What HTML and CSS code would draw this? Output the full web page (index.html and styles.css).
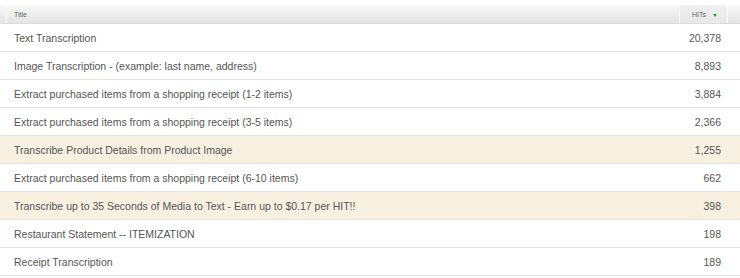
FILE: index.html
```html
<!DOCTYPE html>
<html>
<head>
<meta charset="utf-8">
<link rel="stylesheet" href="styles.css">
</head>
<body>
<div class="table">
  <div class="head">
    <div class="h-gap"></div>
    <div class="h-title">Title</div>
    <div class="h-hits">HITs <span class="arrow"></span></div>
    <div class="h-end"></div>
  </div>
  <div class="row"><span class="t">Text Transcription</span><span class="n">20,378</span></div>
  <div class="row"><span class="t">Image Transcription - (example: last name, address)</span><span class="n">8,893</span></div>
  <div class="row"><span class="t">Extract purchased items from a shopping receipt (1-2 items)</span><span class="n">3,884</span></div>
  <div class="row"><span class="t">Extract purchased items from a shopping receipt (3-5 items)</span><span class="n">2,366</span></div>
  <div class="row hl"><span class="t">Transcribe Product Details from Product Image</span><span class="n">1,255</span></div>
  <div class="row"><span class="t">Extract purchased items from a shopping receipt (6-10 items)</span><span class="n">662</span></div>
  <div class="row hl"><span class="t">Transcribe up to 35 Seconds of Media to Text - Earn up to $0.17 per HIT!!</span><span class="n">398</span></div>
  <div class="row"><span class="t">Restaurant Statement -- ITEMIZATION</span><span class="n">198</span></div>
  <div class="row"><span class="t">Receipt Transcription</span><span class="n">189</span></div>
</div>
</body>
</html>
```
FILE: styles.css
```css
html, body {
  margin: 0;
  padding: 0;
  background: #ffffff;
}
body {
  font-family: "Liberation Sans", Arial, sans-serif;
  padding-top: 5px;
}
.table {
  width: 740px;
}
.head {
  display: flex;
  height: 19px;
  background: linear-gradient(#f7f7f7, #e4e4e4);
  border-bottom: 1px solid #dcdcdc;
  box-sizing: border-box;
}
.h-gap {
  width: 6px;
  border-right: 1px solid #ffffff;
}
.h-title {
  flex: 1;
  font-size: 7px;
  color: #666;
  padding-left: 7px;
  line-height: 19px;
}
.h-hits {
  width: 49px;
  box-sizing: border-box;
  background: linear-gradient(#f0f0f0, #e8e8e8);
  border-left: 1px solid #f8f8f8;
  border-right: 1px solid #ffffff;
  font-size: 7px;
  color: #666;
  line-height: 19px;
  text-align: center;
  padding-left: 2px;
}
.arrow {
  display: inline-block;
  width: 0;
  height: 0;
  border-left: 2.5px solid transparent;
  border-right: 2.5px solid transparent;
  border-top: 3px solid #3a9b3a;
  vertical-align: middle;
  margin-left: 5px;
}
.h-end {
  width: 12px;
}
.row {
  display: flex;
  justify-content: space-between;
  align-items: center;
  height: 28px;
  box-sizing: border-box;
  border-bottom: 1px solid #e4e4e4;
  padding: 0 19px 0 14px;
  font-size: 10.5px;
  color: #555;
}
.row.hl {
  background: #f7f0e1;
}
```
